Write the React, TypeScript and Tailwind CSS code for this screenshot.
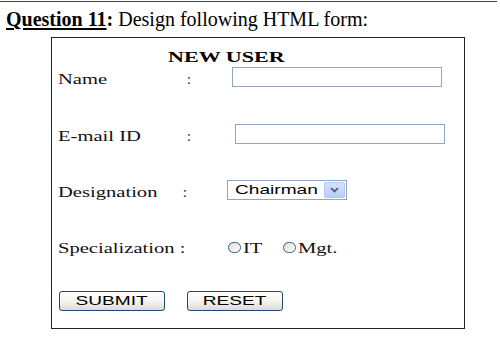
import type { ReactNode } from 'react'

function Wide({ children, className = '' }: { children: ReactNode; className?: string }) {
  return (
    <span className={`inline-block origin-left scale-x-[1.47] whitespace-nowrap ${className}`}>
      {children}
    </span>
  )
}

function Radio() {
  return (
    <span className="inline-block w-[13px] h-[11px] mt-[3px] rounded-full border border-[#2e5f91] bg-linear-to-br from-[#dcdcd6] to-white" />
  )
}

function Button({ label, width }: { label: string; width: string }) {
  return (
    <div
      className={`${width} h-[20px] flex items-center justify-center rounded-[3px] border border-[#24476f] bg-linear-to-b from-white via-[#f4f4f0] to-[#dcdcd6] font-['Liberation_Sans',Arial,sans-serif] text-[13px] text-black`}
    >
      <span className="inline-block origin-center scale-x-[1.47]">{label}</span>
    </div>
  )
}

export default function App() {
  return (
    <div className="w-[500px] h-[340px] bg-white overflow-hidden font-['Liberation_Serif','Times_New_Roman',serif] text-black">
      {/* page rule */}
      <div className="mt-[1px] h-[1px] w-[497px] bg-[#444]" />

      <div className="pl-[6px] mt-[6px] h-[22px] leading-[22px] text-[20px]">
        <span className="font-bold underline underline-offset-2">Question 11</span>
        <span className="font-bold">:</span> Design following HTML form:
      </div>

      <div className="ml-[51px] mt-[7px] w-[414px] h-[292px] border border-[#222] text-[14px] text-[#111]">
        <div className="pl-[116px] mt-[11px] h-[16px] leading-[16px] text-[15px] font-bold text-black">
          <Wide>NEW USER</Wide>
        </div>

        {/* name */}
        <div className="flex items-center h-[20px] mt-[2px] pl-[6px]">
          <div className="w-[129px] mt-[5px]"><Wide>Name</Wide></div>
          <div className="w-[45px] mt-[5px]">:</div>
          <div className="w-[210px] h-[20px] border border-[#8ea6c4] bg-white" />
        </div>

        {/* email */}
        <div className="flex items-center h-[20px] mt-[37px] pl-[6px]">
          <div className="w-[129px] mt-[5px]"><Wide>E-mail ID</Wide></div>
          <div className="w-[48px] mt-[5px]">:</div>
          <div className="w-[210px] h-[20px] border border-[#8ea6c4] bg-white" />
        </div>

        {/* designation */}
        <div className="flex items-center h-[20px] mt-[36px] pl-[6px]">
          <div className="w-[125px] mt-[5px]"><Wide>Designation</Wide></div>
          <div className="w-[44px] mt-[5px]">:</div>
          <div className="w-[120px] h-[20px] flex items-center border border-[#8ea6c4] bg-white">
            <span className="pl-[7px] font-['Liberation_Sans',Arial,sans-serif] text-[13px] text-black">
              <Wide>Chairman</Wide>
            </span>
            <div className="ml-auto mr-[1px] w-[21px] h-[16px] flex items-center justify-center rounded-[2px] border border-[#b3c5f2] bg-linear-to-b from-[#d6e1fe] to-[#b9ccfa]">
              <svg width="9" height="6" viewBox="0 0 9 6">
                <path d="M1 1.2 L4.5 4.5 L8 1.2" fill="none" stroke="#4d6185" strokeWidth="1.8" />
              </svg>
            </div>
          </div>
        </div>

        {/* specialization */}
        <div className="flex items-center h-[20px] mt-[36px] pl-[6px]">
          <div className="w-[170px] mt-[5px]"><Wide>Specialization :</Wide></div>
          <Radio />
          <div className="ml-[2px] w-[40px] mt-[5px]"><Wide>IT</Wide></div>
          <Radio />
          <div className="ml-[2px] mt-[5px]"><Wide>Mgt.</Wide></div>
        </div>

        {/* actions */}
        <div className="flex items-center h-[20px] mt-[35px] pl-[7px]">
          <Button label="SUBMIT" width="w-[106px]" />
          <div className="ml-[22px]">
            <Button label="RESET" width="w-[96px]" />
          </div>
        </div>
      </div>
    </div>
  )
}
